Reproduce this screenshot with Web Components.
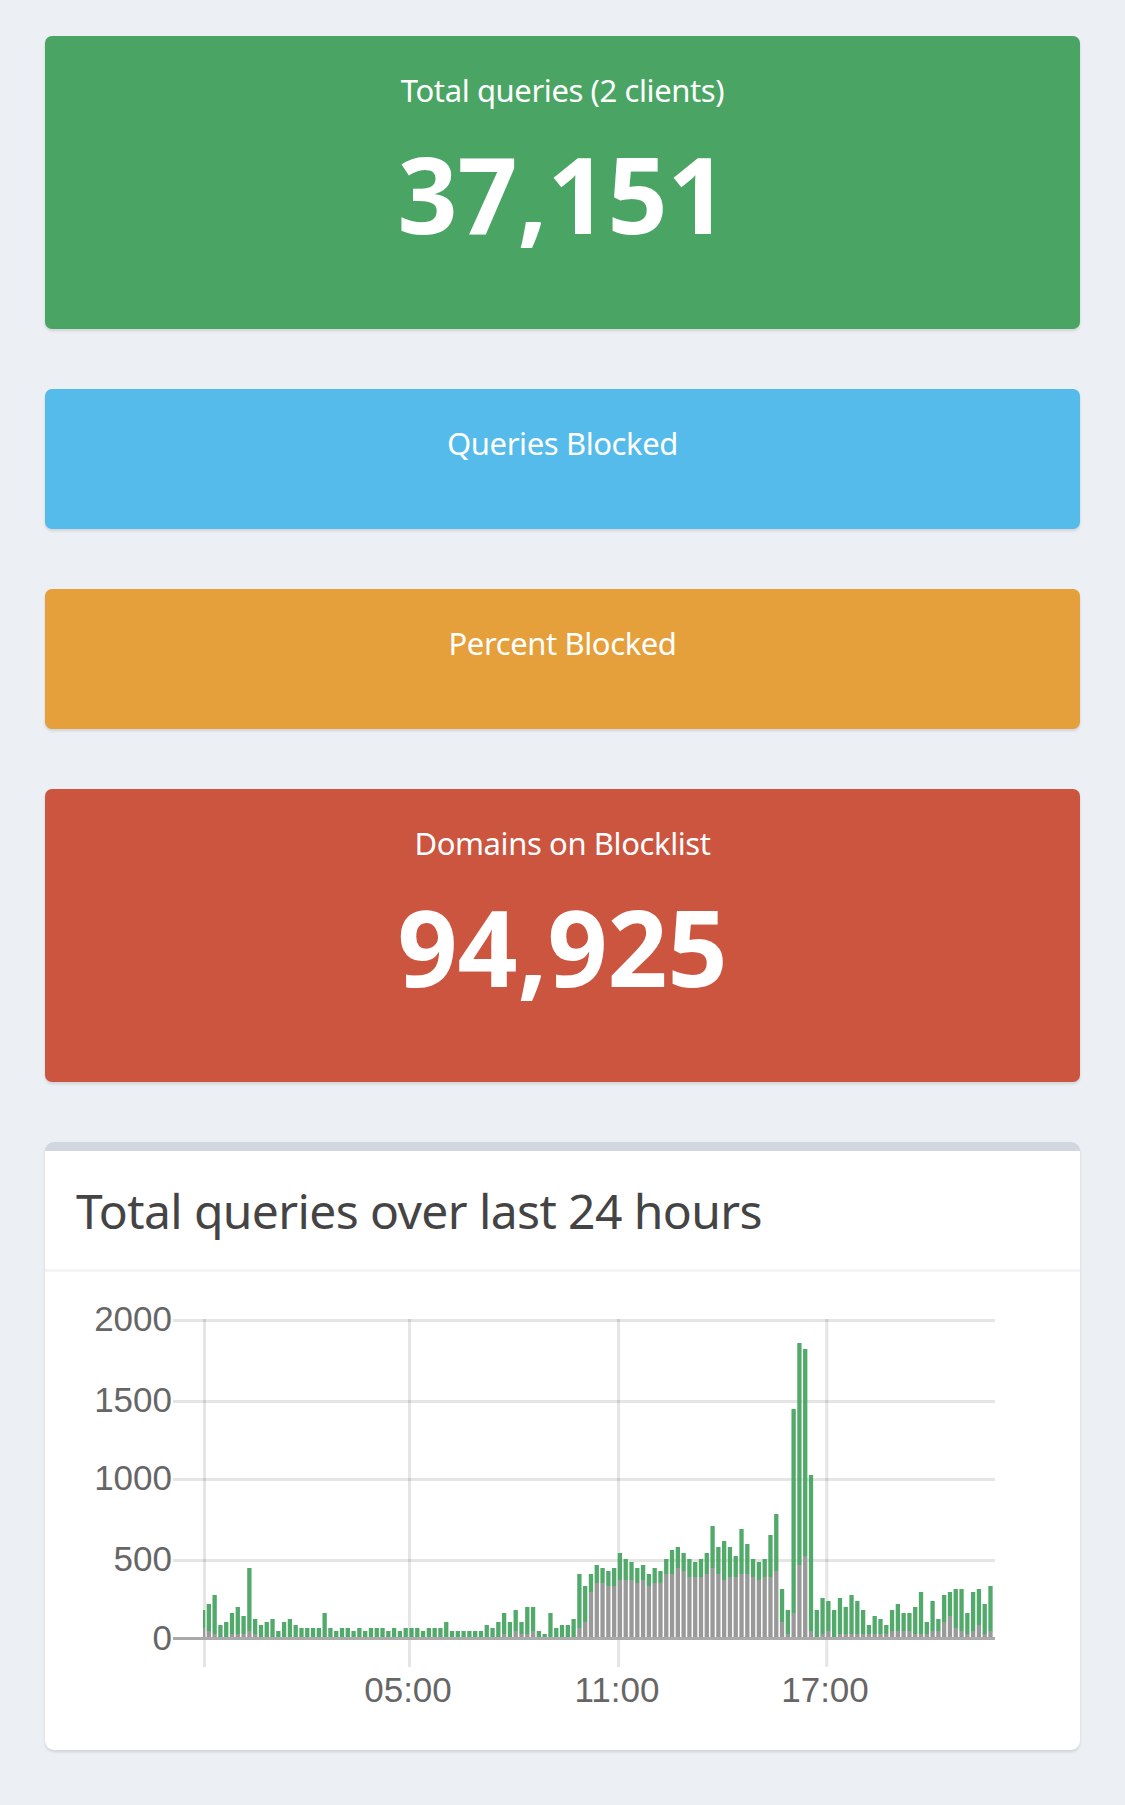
<!DOCTYPE html>
<html>
<head>
<meta charset="utf-8">
<title>Dashboard</title>
<style>
  html, body { margin: 0; background: #ecf0f5; }
  body {
    font-family: "Noto Sans", "Open Sans", sans-serif;
    height: 1805px;
    box-sizing: border-box;
    padding: 36px 45px 0;
    display: flex;
    flex-direction: column;
    gap: 60px;
  }
</style>
</head>
<body>
  <stat-card color="#4aa564">
    <span slot="label">Total queries (2 clients)</span>
    <span slot="value">37,151</span>
  </stat-card>
  <stat-card color="#54bbeb"><span slot="label">Queries Blocked</span></stat-card>
  <stat-card color="#e59f3b"><span slot="label">Percent Blocked</span></stat-card>
  <stat-card color="#cc5540">
    <span slot="label">Domains on Blocklist</span>
    <span slot="value">94,925</span>
  </stat-card>
  <chart-box>
    <span slot="title">Total queries over last 24 hours</span>
    <queries-chart></queries-chart>
  </chart-box>

<script>
class StatCard extends HTMLElement {
  constructor() {
    super();
    this.attachShadow({ mode: "open" });
    const color = this.getAttribute("color") || "#4aa564";
    this.shadowRoot.innerHTML = `
      <style>
        :host {
          display: block;
          background: ${color};
          color: #fff;
          border-radius: 7px;
          box-shadow: 0 2px 3px rgba(0, 0, 0, 0.12);
          text-align: center;
          padding: 27px 0 59px;
        }
        .label { display: block; font-size: 31px; line-height: 54px; letter-spacing: -0.4px; }
        .value { display: block; font-size: 105px; font-weight: 700; line-height: 153px; }
        .value:empty { display: none; }
        ::slotted([slot="value"]) { display: block; }
      </style>
      <div class="label"><slot name="label"></slot></div>
      <div class="value-wrap"><slot name="value"></slot></div>`;
    if (this.querySelector('[slot="value"]')) {
      this.shadowRoot.querySelector(".value-wrap").className = "value";
    }
  }
}

class ChartBox extends HTMLElement {
  constructor() {
    super();
    this.attachShadow({ mode: "open" });
    this.shadowRoot.innerHTML = `
      <style>
        :host {
          display: block;
          background: #fff;
          border-top: 9px solid #d2d6de;
          border-radius: 9px;
          box-shadow: 0 2px 3px rgba(0, 0, 0, 0.12);
        }
        header {
          height: 121px;
          box-sizing: border-box;
          border-bottom: 3px solid #f4f4f4;
          padding: 0 31px;
          display: flex;
          align-items: center;
          color: #444;
          font-size: 48px;
          letter-spacing: -0.6px;
        }
      </style>
      <header><slot name="title"></slot></header>
      <slot></slot>`;
  }
}

// [total, blocked] per 10 minutes, in units of 3px on the chart
const BARS = [
  [9,3],[11,2],[14,1],[4,0],[5,0],[8,1],[10,1],[7,1],[23,2],[6,1],[4,0],[5,0],[6,0],[2,0],[5,0],[6,0],[4,0],
  [3,0],[3,0],[3,0],[3,0],[8,0],[3,0],[2,0],[3,0],[3,0],[2,0],[3,0],[2,0],[3,0],[3,0],[3,0],[2,0],[3,0],[2,0],
  [3,0],[3,0],[3,0],[2,0],[3,0],[3,0],[3,0],[5,0],
  [2,0],[2,0],[2,0],[2,0],[2,0],[2,0],[4,0],[3,0],[5,0],[8,1],[5,0],[9,2],[5,1],[10,1],[10,2],[2,0],[1,0],[8,0],
  [3,0],[4,0],[4,0],[6,0],[21,3],[17,5],[21,15],[24,18],[23,18],[22,17],[23,17],[28,19],[26,19],[25,19],[23,18],
  [24,19],[21,17],[23,18],[22,18],[26,21],[29,21],[30,23],[28,22],[26,20],[25,20],[26,20],[28,21],[37,23],[30,21],
  [32,19],[30,20],[27,20],[36,21],[31,21],[26,20],[25,19],[26,20],[34,20],[41,22],[16,5],[9,1],[76,8],[98,24],
  [96,27],[54,2],[9,0],[13,1],[12,2],[9,0],[13,1],[10,1],[14,1],[12,1],[9,1],[4,1],[7,1],[6,1],[4,1],[9,2],[11,2],
  [8,2],[8,2],[10,1],[15,1],[5,1],[12,2],[6,2],[14,5],[15,7],[16,3],[16,2],[8,1],[15,2],[16,4],[11,1],[17,2]
];

class QueriesChart extends HTMLElement {
  constructor() {
    super();
    this.attachShadow({ mode: "open" });

    const base = 1644;
    const bars = BARS.map(([total, blocked], i) => {
      const x = (200.9 + i * 5.79).toFixed(2);
      const h = total * 3;
      const g = blocked * 3;
      return `<rect x="${x}" y="${base - h}" width="4.3" height="${h - g}" fill="#4aa564" fill-opacity="0.96"/>` +
        (g ? `<rect x="${x}" y="${base - g}" width="4.3" height="${g}" fill="#999"/>` : "");
    }).join("");

    const hLines = [["2000", 1327.5], ["1500", 1408.5], ["1000", 1486.5], ["500", 1567.5]]
      .map(([t, y]) => `<line x1="173" x2="995" y1="${y}" y2="${y}"/>`).join("");
    const vLines = [204.5, 409.5, 618.5, 826.8]
      .map((x) => `<line x1="${x}" x2="${x}" y1="1326" y2="1674"/>`).join("");
    const yLabels = [["2000", 1326], ["1500", 1407], ["1000", 1485], ["500", 1566], ["0", 1645]]
      .map(([t, y]) => `<text x="172" y="${y + 12}" text-anchor="end">${t}</text>`).join("");
    const xLabels = [["05:00", 408], ["11:00", 617], ["17:00", 825]]
      .map(([t, x]) => `<text x="${x}" y="1709" text-anchor="middle">${t}</text>`).join("");

    this.shadowRoot.innerHTML = `
      <style>
        :host { display: block; height: 478px; }
        svg { display: block; }
        .grid line { stroke: rgba(0, 0, 0, 0.1); stroke-width: 3; }
        text { font-family: "Liberation Sans", Arial, sans-serif; font-size: 35px; fill: #666; }
      </style>
      <svg width="1035" height="478" viewBox="45 1279 1035 478">
        <defs><clipPath id="plot"><rect x="203" y="1300" width="793" height="344"/></clipPath></defs>
        <g class="grid">${hLines}${vLines}</g>
        <g clip-path="url(#plot)">${bars}</g>
        <line x1="173" x2="995" y1="1645.5" y2="1645.5" stroke="#aaa" stroke-width="3"/>
        ${yLabels}${xLabels}
      </svg>`;
  }
}

customElements.define("stat-card", StatCard);
customElements.define("chart-box", ChartBox);
customElements.define("queries-chart", QueriesChart);
</script>
</body>
</html>
